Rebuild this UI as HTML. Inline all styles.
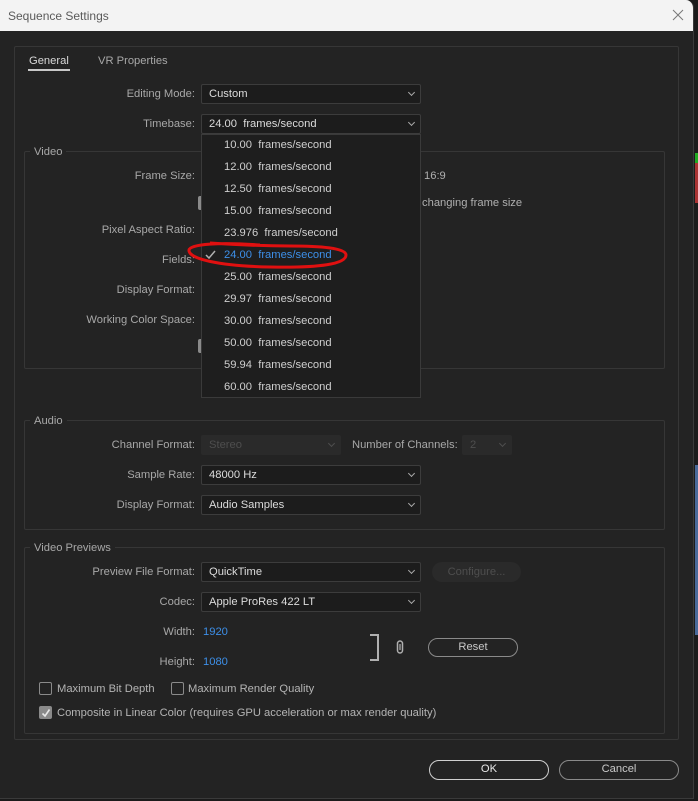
<!DOCTYPE html>
<html><head><meta charset="utf-8"><style>
*{box-sizing:border-box;margin:0;padding:0}
body{width:698px;height:801px;background:#1b1b1b;overflow:hidden;position:relative;font-family:"Liberation Sans",sans-serif;font-size:11.2px;color:#b4b4b4}
.a{position:absolute;white-space:nowrap;line-height:14px}
.dlg{position:absolute;left:0;top:0;width:694px;height:799px;background:#232323;border-radius:0 8px 0 0;overflow:hidden;border-right:1px solid #3a3a3a;border-bottom:1px solid #3a3a3a}
.title{position:absolute;left:0;top:0;width:694px;height:31px;background:#f3f3f3}
.box{position:absolute;border:1px solid #363636;border-radius:2px}
.lbl{position:absolute;text-align:right;width:195px;left:0;white-space:nowrap;line-height:14px;color:#a8a8a8}
.dd{position:absolute;left:201px;width:220px;height:20px;background:#1c1c1c;border:1px solid #3c3c3c;border-radius:2px;color:#dcdcdc;padding-left:7px;line-height:18px}
.dd:after{content:"";position:absolute;right:6px;top:5px;width:4px;height:4px;border-right:1px solid #aaa;border-bottom:1px solid #aaa;transform:rotate(45deg)}
.dis{background:#2a2a2a;border-color:#2a2a2a;color:#4e4e4e}
.dis:after{border-color:#4e4e4e}
.gl{position:absolute;background:#232323;padding:0 4px;color:#a8a8a8;line-height:14px}
.btn{position:absolute;border:1px solid #8a8a8a;border-radius:10px;text-align:center;color:#c8c8c8;line-height:17px}
.cb{position:absolute;width:13px;height:13px;border:1px solid #8a8a8a;border-radius:2px}
.li{position:absolute;left:224px;color:#cfcfcf;line-height:14px;white-space:nowrap}
</style></head><body>
<div class="dlg">
<div class="title"></div>
<div class="a" style="left:8px;top:9px;color:#5a5a5a;font-size:12px">Sequence Settings</div>
<svg class="a" style="left:672px;top:9px" width="12" height="12"><path d="M1 1L11 11M11 1L1 11" stroke="#777" stroke-width="1"/></svg>

<div class="box" style="left:14px;top:46px;width:665px;height:694px"></div>
<div class="a" style="left:29px;top:54px;color:#d8d8d8">General</div>
<div class="a" style="left:28px;top:69px;width:42px;height:2px;background:#c8c8c8"></div>
<div class="a" style="left:98px;top:54px;color:#a8a8a8">VR Properties</div>

<div class="lbl" style="top:87px">Editing Mode:</div>
<div class="dd" style="top:84px">Custom</div>
<div class="lbl" style="top:117px">Timebase:</div>
<div class="dd" style="top:114px">24.00&nbsp; frames/second</div>

<div class="box" style="left:24px;top:151px;width:641px;height:218px"></div>
<div class="gl" style="left:30px;top:145px">Video</div>
<div class="lbl" style="top:169px">Frame Size:</div>
<div class="a" style="left:424px;top:169px;color:#b0b0b0">16:9</div>
<div class="a" style="left:422px;top:196px;color:#b0b0b0">changing frame size</div>
<div class="a" style="left:198px;top:196px;width:4px;height:14px;background:#8a8a8a;border-radius:2px 0 0 2px"></div>
<div class="lbl" style="top:223px">Pixel Aspect Ratio:</div>
<div class="lbl" style="top:253px">Fields:</div>
<div class="lbl" style="top:283px">Display Format:</div>
<div class="lbl" style="top:313px">Working Color Space:</div>
<div class="a" style="left:198px;top:339px;width:4px;height:14px;background:#8a8a8a;border-radius:2px 0 0 2px"></div>

<div class="box" style="left:24px;top:420px;width:641px;height:110px"></div>
<div class="gl" style="left:30px;top:414px">Audio</div>
<div class="lbl" style="top:438px">Channel Format:</div>
<div class="dd dis" style="top:435px;width:140px">Stereo</div>
<div class="a" style="left:352px;top:438px;color:#a8a8a8">Number of Channels:</div>
<div class="dd dis" style="top:435px;left:462px;width:50px">2</div>
<div class="lbl" style="top:468px">Sample Rate:</div>
<div class="dd" style="top:465px">48000 Hz</div>
<div class="lbl" style="top:498px">Display Format:</div>
<div class="dd" style="top:495px">Audio Samples</div>

<div class="box" style="left:24px;top:547px;width:641px;height:187px"></div>
<div class="gl" style="left:30px;top:541px">Video Previews</div>
<div class="lbl" style="top:565px">Preview File Format:</div>
<div class="dd" style="top:562px">QuickTime</div>
<div class="a" style="left:432px;top:562px;width:89px;height:20px;background:#2a2a2a;border-radius:10px;color:#4e4e4e;text-align:center;line-height:20px">Configure...</div>
<div class="lbl" style="top:595px">Codec:</div>
<div class="dd" style="top:592px">Apple ProRes 422 LT</div>
<div class="lbl" style="top:625px">Width:</div>
<div class="a" style="left:203px;top:625px;color:#3d8fe8">1920</div>
<div class="lbl" style="top:655px">Height:</div>
<div class="a" style="left:203px;top:655px;color:#3d8fe8">1080</div>
<div class="a" style="left:370px;top:634px;width:9px;height:27px;border:2px solid #b0b0b0;border-left:none"></div>
<svg class="a" style="left:396px;top:640px" width="8" height="14"><rect x="1.5" y="1" width="5" height="12" rx="2.5" fill="none" stroke="#b0b0b0" stroke-width="1.5"/><path d="M4 4V10" stroke="#b0b0b0" stroke-width="1.2"/></svg>
<div class="btn" style="left:428px;top:638px;width:90px;height:19px">Reset</div>
<div class="cb" style="left:39px;top:682px"></div>
<div class="a" style="left:57px;top:682px">Maximum Bit Depth</div>
<div class="cb" style="left:171px;top:682px"></div>
<div class="a" style="left:188px;top:682px">Maximum Render Quality</div>
<div class="cb" style="left:39px;top:706px;background:#8a8a8a"></div>
<svg class="a" style="left:40px;top:707px" width="12" height="12"><path d="M2.5 6.5L5 9L9.5 2.5" stroke="#e8e8e8" stroke-width="1.6" fill="none"/></svg>
<div class="a" style="left:57px;top:706px">Composite in Linear Color (requires GPU acceleration or max render quality)</div>

<div class="btn" style="left:429px;top:760px;width:120px;height:20px;color:#e8e8e8;border-color:#cfcfcf">OK</div>
<div class="btn" style="left:559px;top:760px;width:120px;height:20px">Cancel</div>

<div class="a" style="left:201px;top:134px;width:220px;height:264px;background:#1e1e1e;border:1px solid #3a3a3a"></div>
<div class="li" style="top:138px">10.00&nbsp; frames/second</div>
<div class="li" style="top:160px">12.00&nbsp; frames/second</div>
<div class="li" style="top:182px">12.50&nbsp; frames/second</div>
<div class="li" style="top:204px">15.00&nbsp; frames/second</div>
<div class="li" style="top:226px">23.976&nbsp; frames/second</div>
<div class="li" style="top:248px;color:#3d8fe8">24.00&nbsp; frames/second</div>
<svg class="a" style="left:205px;top:250px" width="12" height="10"><path d="M1 5L4 8L10 1" stroke="#b0b0b0" stroke-width="1.5" fill="none"/></svg>
<div class="li" style="top:270px">25.00&nbsp; frames/second</div>
<div class="li" style="top:292px">29.97&nbsp; frames/second</div>
<div class="li" style="top:314px">30.00&nbsp; frames/second</div>
<div class="li" style="top:336px">50.00&nbsp; frames/second</div>
<div class="li" style="top:358px">59.94&nbsp; frames/second</div>
<div class="li" style="top:380px">60.00&nbsp; frames/second</div>
<svg class="a" style="left:180px;top:235px" width="175" height="40"><path d="M80 10C40 7 10 9 9 15C8 24 40 31 90 32C140 33 166 29 166 20C166 13 140 11 110 11C90 11 60 10 30 8" stroke="#e01010" stroke-width="3" fill="none"/></svg>
</div>
<div class="a" style="left:695px;top:153px;width:3px;height:10px;background:#2a2"></div>
<div class="a" style="left:695px;top:163px;width:3px;height:40px;background:#a33"></div>
<div class="a" style="left:695px;top:465px;width:3px;height:170px;background:#4a6a9a"></div>
</body></html>
